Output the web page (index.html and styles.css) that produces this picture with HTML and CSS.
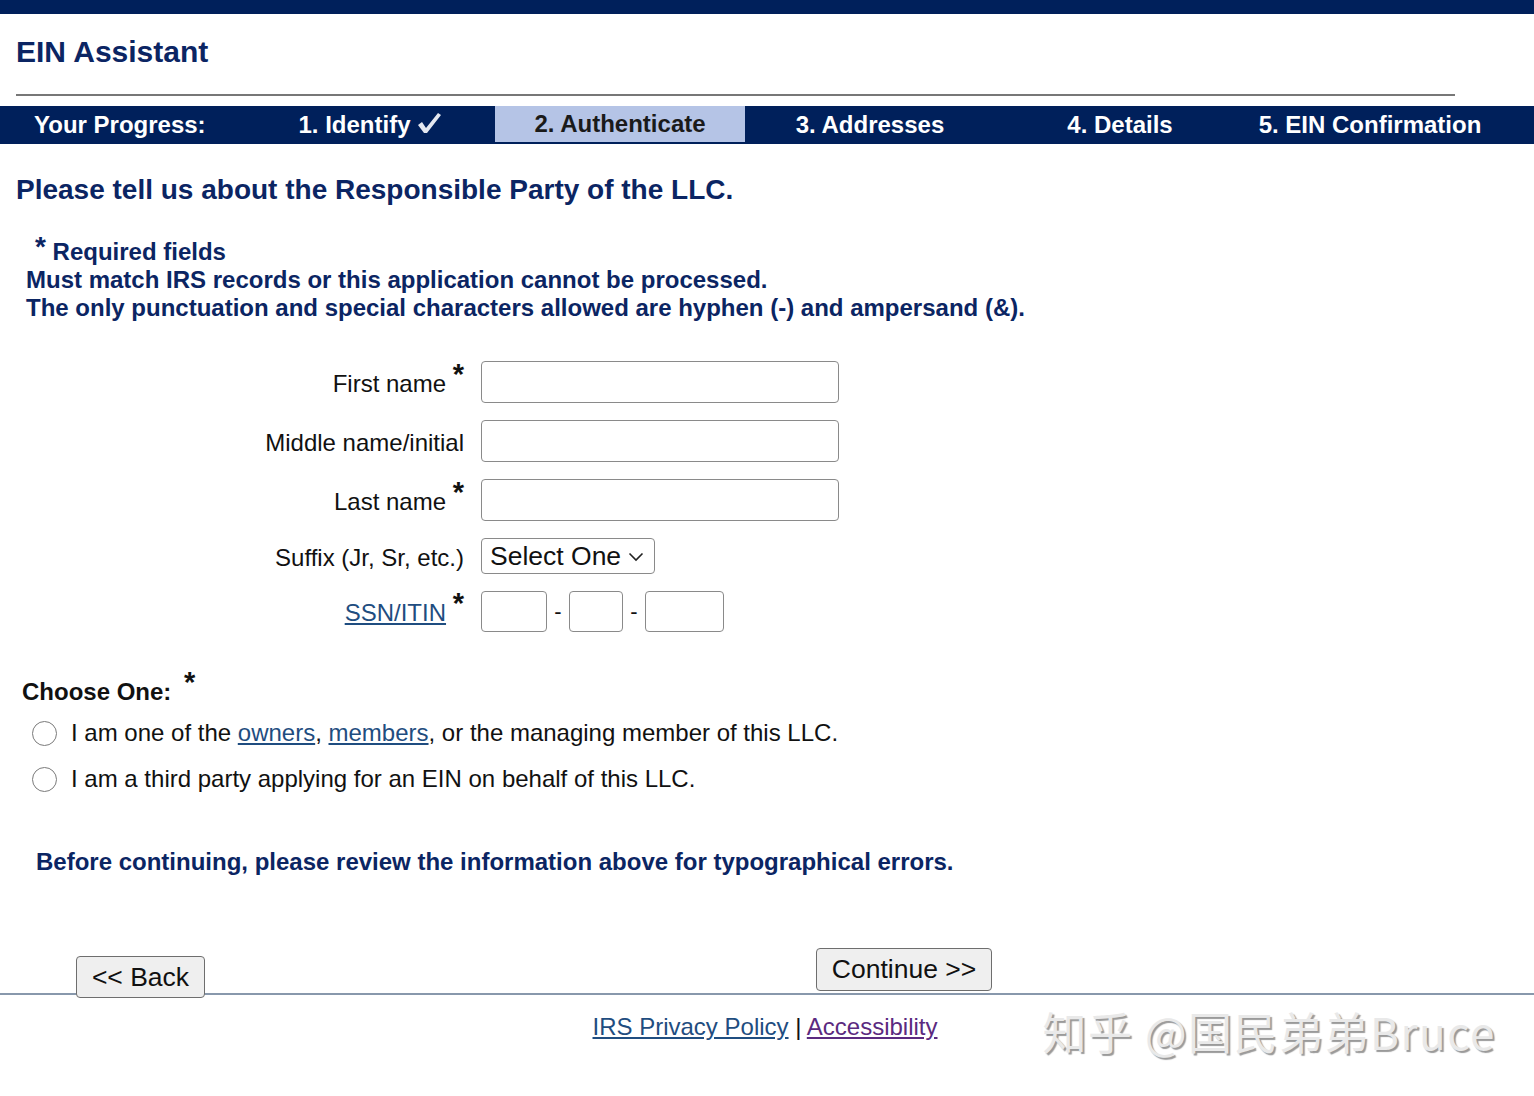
FILE: index.html
```html
<!DOCTYPE html>
<html lang="en">
<head>
<meta charset="utf-8">
<title>EIN Assistant</title>
<link rel="stylesheet" href="styles.css">
</head>
<body>
<div class="topbar"></div>
<h1 class="title">EIN Assistant</h1>
<div class="rule"></div>
<nav class="progress">
  <div class="step step-first">Your Progress:</div>
  <div class="step">1. Identify <svg class="check" width="26" height="24" viewBox="0 0 26 24"><path d="M2 14 L6 11 L10 17 L22 2 L25 4 L11 22 L8 22 Z" fill="#e4e8f0"/></svg></div>
  <div class="step step-active">2. Authenticate</div>
  <div class="step">3. Addresses</div>
  <div class="step">4. Details</div>
  <div class="step">5. EIN Confirmation</div>
</nav>
<main class="content">
  <h2 class="heading">Please tell us about the Responsible Party of the LLC.</h2>
  <div class="notes">
    <p class="req"><span class="star">*</span> Required fields</p>
    <p class="note">Must match IRS records or this application cannot be processed.</p>
    <p class="note">The only punctuation and special characters allowed are hyphen (-) and ampersand (&amp;).</p>
  </div>
  <div class="form">
    <label class="lbl">First name <span class="ast">*</span></label>
    <div class="field"><input class="txt" type="text"></div>
    <label class="lbl">Middle name/initial</label>
    <div class="field"><input class="txt" type="text"></div>
    <label class="lbl">Last name <span class="ast">*</span></label>
    <div class="field"><input class="txt" type="text"></div>
    <label class="lbl">Suffix (Jr, Sr, etc.)</label>
    <div class="field"><div class="select">Select One <svg class="chev" width="16" height="10" viewBox="0 0 16 10"><path d="M1.5 1.5 L8 8 L14.5 1.5" fill="none" stroke="#222" stroke-width="1.6"/></svg></div></div>
    <label class="lbl"><a href="#" class="link">SSN/ITIN</a> <span class="ast">*</span></label>
    <div class="field ssn"><input class="box b1" type="text"><span class="dash">-</span><input class="box b2" type="text"><span class="dash">-</span><input class="box b3" type="text"></div>
  </div>
  <div class="choose">
    <p class="choose-title">Choose One: <span class="ast">*</span></p>
    <label class="opt"><span class="radio"></span><span class="opt-text">I am one of the <a href="#" class="link">owners</a>, <a href="#" class="link">members</a>, or the managing member of this LLC.</span></label>
    <label class="opt"><span class="radio"></span><span class="opt-text">I am a third party applying for an EIN on behalf of this LLC.</span></label>
  </div>
  <p class="review">Before continuing, please review the information above for typographical errors.</p>
  <div class="buttons">
    <button class="btn btn-back">&lt;&lt; Back</button>
    <button class="btn btn-cont">Continue &gt;&gt;</button>
  </div>
</main>
<footer class="footer">
  <div class="links"><a href="#" class="link">IRS Privacy Policy</a> | <a href="#" class="link visited">Accessibility</a></div>
  <div class="watermark">知乎 @国民弟弟Bruce</div>
</footer>
</body>
</html>
```
FILE: styles.css
```css
* { box-sizing: border-box; }
html, body { margin: 0; padding: 0; background: #fff; }
body { font-family: "Liberation Sans", Arial, sans-serif; color: #111; }
p { margin: 0; }

.topbar { height: 14px; background: #00205b; }

.title {
  margin: 0;
  padding: 21px 16px 0;
  font-size: 30px;
  line-height: 34px;
  font-weight: bold;
  color: #0b2563;
}

.rule {
  margin: 25px 0 0 16px;
  width: 1439px;
  height: 2px;
  background: #777;
}

.progress {
  display: flex;
  margin-top: 10px;
  height: 38px;
  background: #00205b;
}
.step {
  width: 250px;
  display: flex;
  align-items: center;
  justify-content: center;
  font-size: 24px;
  font-weight: bold;
  color: #fff;
}
.step-first { width: 245px; justify-content: flex-start; padding-left: 34px; }
.step-active { background: #b5c4e6; color: #1a1a1a; height: 36px; }
.check { margin-left: 5px; margin-top: -4px; }

.content { padding: 0 0 0 16px; }

.heading {
  margin: 30px 0 0;
  font-size: 28px;
  line-height: 32px;
  font-weight: bold;
  color: #0b2563;
}

.notes { margin-top: 27px; padding-left: 10px; color: #0b2563; font-weight: bold; font-size: 24px; }
.req { padding-left: 9px; line-height: 28px; }
.star { font-size: 28px; vertical-align: 4px; }
.note { line-height: 28px; }

.form {
  display: grid;
  grid-template-columns: 448px 400px;
  column-gap: 17px;
  row-gap: 17px;
  margin-top: 39px;
  align-items: center;
}
.lbl { text-align: right; font-size: 24px; line-height: 28px; color: #111; padding-top: 3px; }
.ast { font-weight: bold; font-size: 29px; line-height: 0; vertical-align: 8px; margin-left: 0; color: #111; }
.field { display: flex; align-items: center; }
.txt {
  width: 358px; height: 42px;
  border: 1.5px solid #8a8a8a; border-radius: 4px;
  margin: 0; padding: 0 8px;
  font-size: 22px; background: #fff;
}
.select {
  width: 174px; height: 36px;
  border: 1.5px solid #8a8a8a; border-radius: 4px;
  display: flex; align-items: center; justify-content: space-between;
  padding: 0 10px 0 8px;
  font-size: 26.5px; color: #111;
}
.chev { margin-top: 2px; }
.box {
  height: 41px; margin: 0; padding: 0 6px;
  border: 1.5px solid #8a8a8a; border-radius: 4px; background: #fff;
  font-size: 22px;
}
.b1 { width: 66px; }
.b2 { width: 54px; }
.b3 { width: 79px; }
.dash { width: 22px; text-align: center; font-size: 22px; }

.link { color: #1f4d80; text-decoration: underline; }
.visited { color: #5b2a80; }

.choose { margin-top: 45px; padding-left: 6px; font-size: 24px; }
.choose-title { font-weight: bold; color: #111; line-height: 30px; margin-bottom: 3px; }
.choose-title .ast { margin-left: 6px; }
.opt { display: flex; align-items: center; height: 46px; padding-left: 10px; color: #111; }
.radio {
  width: 25px; height: 25px; border-radius: 50%;
  border: 1.5px solid #7a7a7a; margin-right: 14px; flex: none;
}

.review { margin: 46px 0 0 20px; font-size: 24px; font-weight: bold; color: #0b2563; }

.buttons { display: flex; align-items: flex-end; margin-top: 67px; height: 50px; position: relative; }
.btn {
  font-family: "Liberation Sans", Arial, sans-serif;
  font-size: 26.5px; color: #111;
  background: #efefef;
  border: 1.5px solid #6e6e6e; border-radius: 4px;
  margin: 0; padding: 0;
}
.btn-back { width: 129px; height: 42px; margin-left: 60px; position: relative; z-index: 1; margin-bottom: -5px; }
.btn-cont { width: 176px; height: 43px; margin-left: 611px; margin-bottom: 2px; }

.footer { border-top: 2px solid #8898ac; position: relative; height: 103px; }
.links { text-align: center; padding-right: 4px; padding-top: 18px; font-size: 24px; color: #111; }
.watermark {
  position: absolute; right: 38px; top: 4px;
  font-family: "Noto Sans CJK SC", sans-serif;
  font-size: 44px; color: #e9e9e9;
  text-shadow: 2px 2px 1px #9a9a9a;
  letter-spacing: 1.5px;
}
```
